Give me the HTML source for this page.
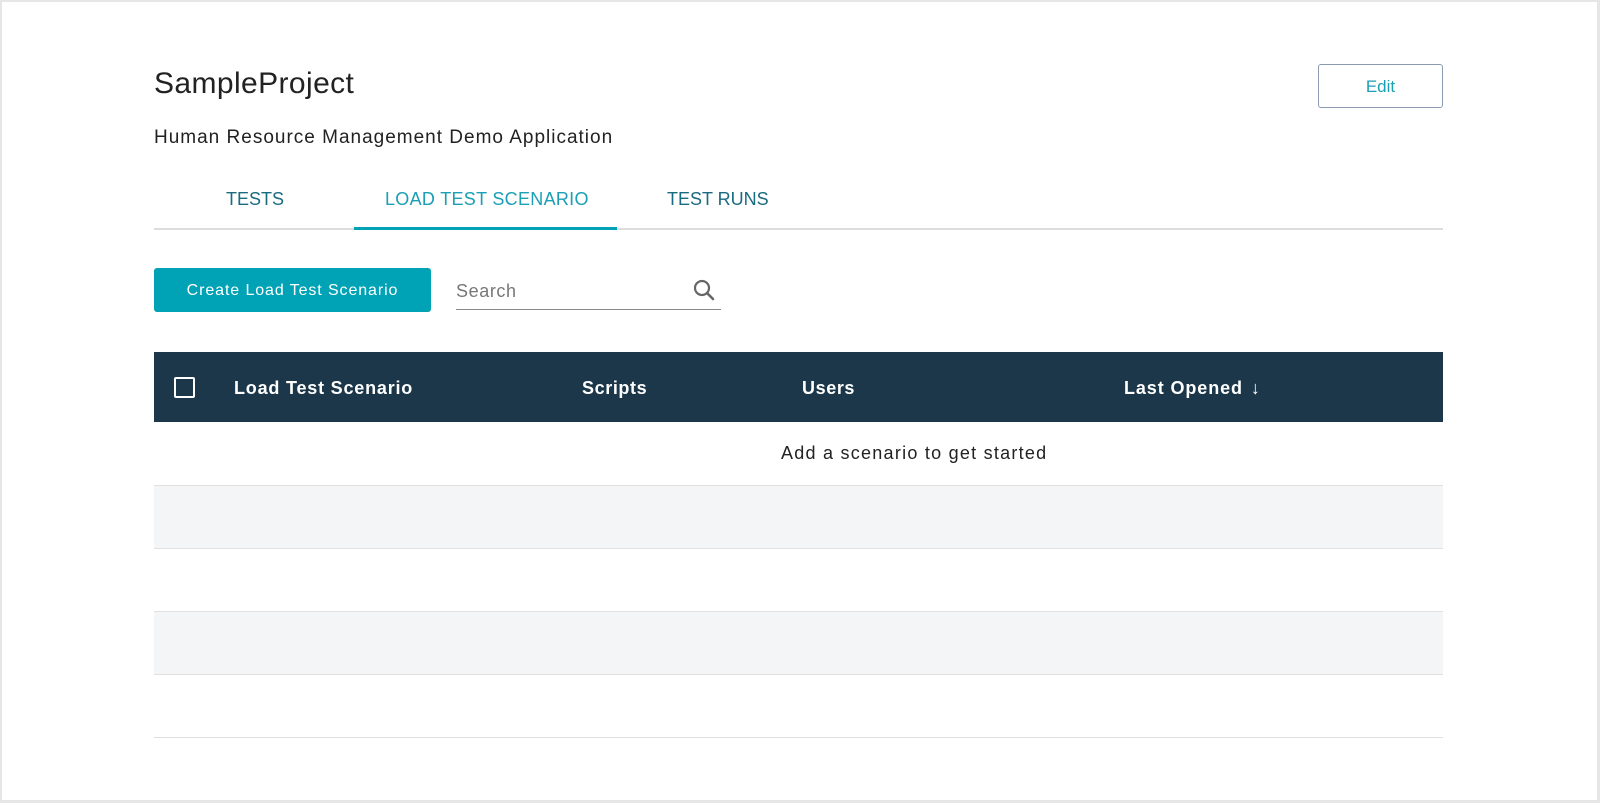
<!DOCTYPE html>
<html><head><meta charset="utf-8"><style>
*{margin:0;padding:0;box-sizing:border-box}
body{width:1600px;height:803px;background:#e6e6e6;font-family:"Liberation Sans",sans-serif;position:relative;overflow:hidden}
.card{position:absolute;left:2px;top:2px;width:1595px;height:798px;background:#fff}
.a{position:absolute;white-space:nowrap}
</style></head><body>
<div class="card"></div>
<div class="a" style="left:154px;top:67px;font-size:30px;color:#222;letter-spacing:0.4px">SampleProject</div>
<div class="a" style="left:1318px;top:64px;width:125px;height:44px;border:1px solid #8a9bb0;border-radius:3px;color:#1a9fb4;font-size:17px;text-align:center;line-height:44px">Edit</div>
<div class="a" style="left:154px;top:127px;font-size:19px;color:#222;letter-spacing:1px">Human Resource Management Demo Application</div>
<div class="a" style="left:226px;top:189px;font-size:18px;color:#1a6a80">TESTS</div>
<div class="a" style="left:385px;top:189px;font-size:18px;color:#1a9fb4;letter-spacing:0.3px">LOAD TEST SCENARIO</div>
<div class="a" style="left:667px;top:189px;font-size:18px;color:#1a6a80">TEST RUNS</div>
<div class="a" style="left:154px;top:228px;width:1289px;height:2px;background:#dcdcdc"></div>
<div class="a" style="left:354px;top:227px;width:263px;height:3px;background:#00a2b5"></div>
<div class="a" style="left:154px;top:268px;width:277px;height:44px;background:#00a2b5;border-radius:3px;color:#fff;font-size:16px;text-align:center;line-height:46px;letter-spacing:0.9px">Create Load Test Scenario</div>
<div class="a" style="left:456px;top:281px;font-size:18px;color:#777;letter-spacing:0.6px">Search</div>
<div class="a" style="left:456px;top:309px;width:265px;height:1px;background:#888"></div>
<svg class="a" style="left:690px;top:276px" width="30" height="30"><circle cx="12" cy="12" r="7" fill="none" stroke="#666" stroke-width="2.2"/><path d="M17 17L23 23" stroke="#666" stroke-width="2.6" stroke-linecap="round"/></svg>
<div class="a" style="left:154px;top:352px;width:1289px;height:70px;background:#1b3749"></div>
<div class="a" style="left:174px;top:377px;width:21px;height:21px;border:2px solid #fff;border-radius:2px"></div>
<div class="a" style="left:234px;top:378px;font-size:18px;font-weight:bold;color:#fff;letter-spacing:0.8px">Load Test Scenario</div>
<div class="a" style="left:582px;top:378px;font-size:18px;font-weight:bold;color:#fff;letter-spacing:0.6px">Scripts</div>
<div class="a" style="left:802px;top:378px;font-size:18px;font-weight:bold;color:#fff;letter-spacing:0.6px">Users</div>
<div class="a" style="left:1124px;top:378px;font-size:18px;font-weight:bold;color:#fff;letter-spacing:0.9px">Last Opened <span style="font-weight:normal;margin-left:2px">&#8595;</span></div>
<div class="a" style="left:781px;top:443px;font-size:18px;color:#222;letter-spacing:1.25px">Add a scenario to get started</div>
<div class="a" style="left:154px;top:485px;width:1289px;height:63px;background:#f4f5f6;border-top:1px solid #e0e0e0"></div>
<div class="a" style="left:154px;top:548px;width:1289px;height:1px;background:#e0e0e0"></div>
<div class="a" style="left:154px;top:611px;width:1289px;height:63px;background:#f4f5f6;border-top:1px solid #e0e0e0"></div>
<div class="a" style="left:154px;top:674px;width:1289px;height:1px;background:#e0e0e0"></div>
<div class="a" style="left:154px;top:737px;width:1289px;height:1px;background:#e0e0e0"></div>
</body></html>
